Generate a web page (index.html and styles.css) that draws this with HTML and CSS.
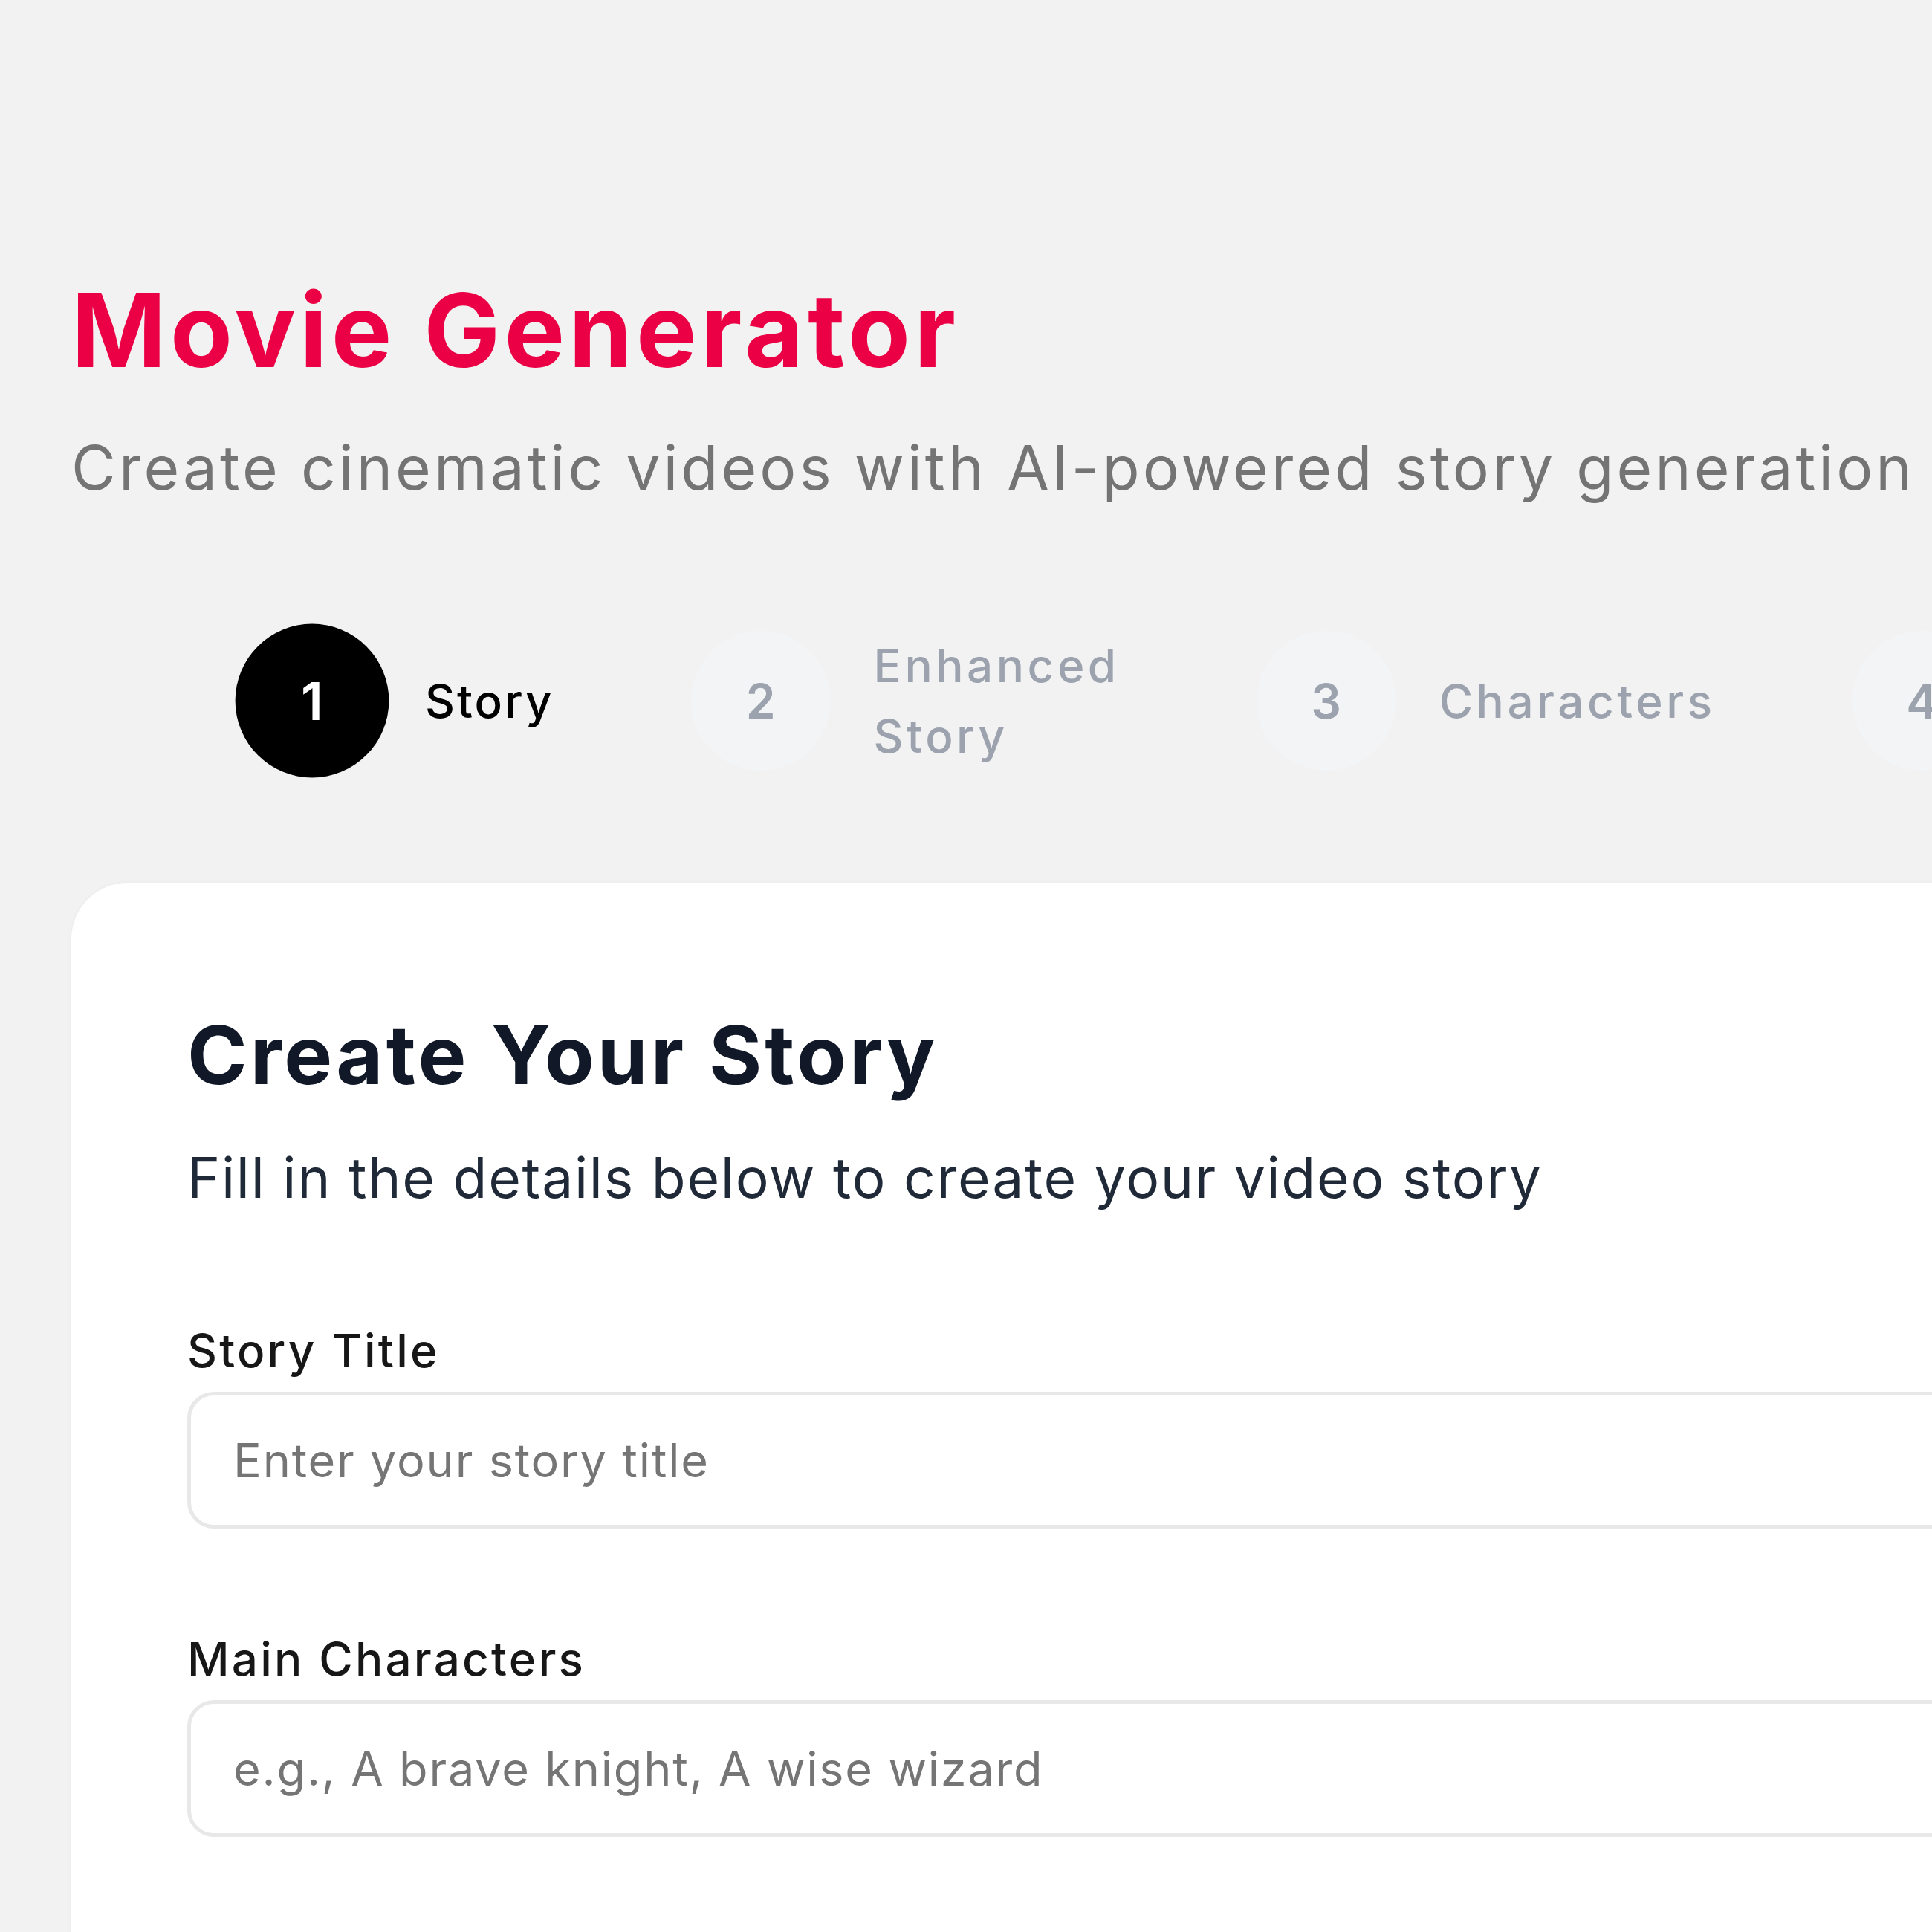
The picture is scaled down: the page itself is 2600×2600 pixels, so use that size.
FILE: index.html
```html
<!DOCTYPE html>
<html lang="en">
<head>
    <meta charset="UTF-8">
    <meta name="viewport" content="width=device-width, initial-scale=1.0">
    <title>Movie Generator</title>
    <link rel="stylesheet" href="styles.css">
</head>
<body>
    <div class="page">
        <h1 class="title">Movie Generator</h1>
        <p class="subtitle">Create cinematic videos with AI-powered story generation and smart editing</p>

        <div class="steps">
            <div class="step active">
                <div class="step-circle">1</div>
                <div class="step-label">Story</div>
            </div>
            <div class="step">
                <div class="step-circle">2</div>
                <div class="step-label">Enhanced Story</div>
            </div>
            <div class="step">
                <div class="step-circle">3</div>
                <div class="step-label">Characters</div>
            </div>
            <div class="step">
                <div class="step-circle">4</div>
                <div class="step-label">Scenes</div>
            </div>
        </div>

        <div class="card">
            <h2 class="card-title">Create Your Story</h2>
            <p class="card-desc">Fill in the details below to create your video story</p>

            <div class="field">
                <label for="storyTitle">Story Title</label>
                <input type="text" id="storyTitle" placeholder="Enter your story title">
            </div>

            <div class="field">
                <label for="characters">Main Characters</label>
                <input type="text" id="characters" placeholder="e.g., A brave knight, A wise wizard">
            </div>
        </div>
    </div>
</body>
</html>
```

FILE: styles.css
```css
html, body {
    margin: 0;
    overflow: hidden;
}

body {
    background-color: #f2f2f2;
    font-family: Inter, "Noto Sans", sans-serif;
}

.page {
    width: 2900px;
    padding: 362px 0 0 96px;
}

/* Header */
.title {
    margin: 0;
    font-size: 137px;
    line-height: 164px;
    font-weight: 700;
    letter-spacing: 5.3px;
    color: #eb0045;
}

.subtitle {
    margin: 54px 0 0 0;
    font-size: 82px;
    line-height: 100px;
    letter-spacing: 4px;
    color: #747474;
    white-space: nowrap;
}

/* Step indicator */
.steps {
    display: flex;
    align-items: center;
    gap: 184px;
    margin: 168px 0 0 230px;
}

.step {
    display: flex;
    align-items: center;
    gap: 58px;
    flex-shrink: 0;
}

.step-circle {
    width: 188px;
    height: 188px;
    border-radius: 50%;
    background-color: #f3f4f6;
    color: #9ca3af;
    display: flex;
    align-items: center;
    justify-content: center;
    font-size: 64px;
    font-weight: 600;
    flex-shrink: 0;
}

.step-label {
    width: min-content;
    font-size: 62px;
    line-height: 95px;
    font-weight: 500;
    letter-spacing: 4.5px;
    color: #9ca3af;
}

.step.active .step-circle {
    background-color: #000;
    color: #fff;
    transform: scale(1.1);
}

.step.active .step-label {
    color: #000;
    letter-spacing: 3px;
}

/* Form card */
.card {
    margin-top: 150px;
    background-color: #fff;
    border-radius: 76px;
    padding: 166px 159px 200px 156px;
    box-shadow: 0 0 6px rgba(0, 0, 0, 0.04);
    min-height: 1400px;
}

.card-title {
    margin: 0;
    font-size: 109px;
    line-height: 131px;
    font-weight: 700;
    letter-spacing: 4px;
    color: #111827;
}

.card-desc {
    margin: 43px 0 0 0;
    font-size: 75px;
    line-height: 114px;
    letter-spacing: 1.7px;
    color: #1f2937;
}

.field {
    margin-top: 128px;
    display: flex;
    flex-direction: column;
    gap: 8px;
}

.field label {
    font-size: 62px;
    line-height: 95px;
    font-weight: 500;
    letter-spacing: 3.2px;
    color: #171717;
}

.field input {
    box-sizing: border-box;
    width: 100%;
    height: 184px;
    padding: 0 57px;
    border: 5px solid #e8e8e8;
    border-radius: 36px;
    background-color: #fff;
    font-family: Inter, "Noto Sans", sans-serif;
    font-size: 63px;
    letter-spacing: 1.8px;
    color: #111;
}

.field input::placeholder {
    color: #757575;
}
```
